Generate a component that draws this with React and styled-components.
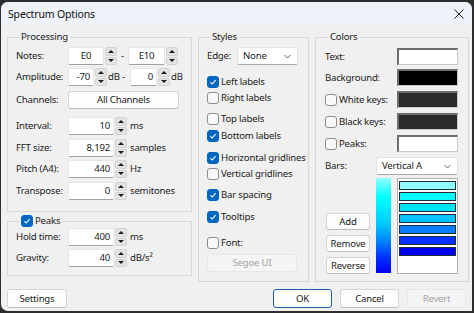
import React from 'react';
import styled, { createGlobalStyle } from 'styled-components';

const Global = createGlobalStyle`
  html, body { margin: 0; padding: 0; background: #2e2e2e; }
  body { width: 474px; height: 313px; overflow: hidden; font-family: "Noto Sans", "Open Sans", sans-serif; }
`;

const Window = styled.div`
  margin: 2px 0 0 1px;
  width: 471px;
  height: 309px;
  background: #f0f0f0;
  border-radius: 7px 7px 0 7px;
  overflow: hidden;
  display: flex;
  flex-direction: column;
  font-size: 9.6px;
  letter-spacing: -0.2px;
  line-height: 12px;
  color: #1b1b1b;
`;

const TitleBar = styled.div`
  height: 24px;
  flex: none;
  background: #eef2f9;
  display: flex;
  align-items: center;
  justify-content: space-between;
  padding: 0 8px 0 7px;
`;

const Title = styled.div`
  font-size: 10.5px;
  letter-spacing: -0.15px;
  color: #111;
`;

const Body = styled.div`
  flex: 1;
  display: flex;
  flex-direction: column;
  padding: 5px 4px 0 6px;
`;

const Columns = styled.div`
  display: grid;
  grid-template-columns: 185px 111px 154px;
  column-gap: 6px;
`;

const LeftCol = styled.div`
  display: flex;
  flex-direction: column;
`;

const Group = styled.fieldset`
  margin: ${p => p.$mt || 0}px 0 0 0;
  padding: ${p => p.$pad};
  border: 1px solid #d8d8d8;
  min-width: 0;
  display: flex;
  flex-direction: column;
`;

const Legend = styled.legend`
  padding: 0 2px;
  margin-left: 3px;
  line-height: 12px;
  display: flex;
  align-items: center;
  gap: 2px;
`;

const Row = styled.div`
  display: flex;
  align-items: center;
  height: ${p => p.$h || 18}px;
  margin-top: ${p => p.$mt || 0}px;
`;

const Label = styled.div`
  width: ${p => p.$w}px;
  flex: none;
  white-space: nowrap;
`;

const Field = styled.div`
  width: ${p => p.$w}px;
  height: 18px;
  box-sizing: border-box;
  flex: none;
  background: #fff;
  border: 1px solid #e6e6e6;
  border-bottom-color: #a2a2a2;
  border-radius: 2px;
  display: flex;
  align-items: center;
  justify-content: ${p => (p.$center ? 'center' : 'flex-end')};
  padding: 0 3px;
`;

const Spin = styled.div`
  width: 12px;
  height: 18px;
  flex: none;
  margin-left: 1px;
  display: flex;
  flex-direction: column;
  gap: 1px;
`;

const SpinBtn = styled.div`
  flex: 1;
  background: #e4e4e4;
  border: 1px solid #d2d2d2;
  border-radius: 2px;
  display: flex;
  align-items: center;
  justify-content: center;
`;

const Arrow = styled.span`
  width: 0;
  height: 0;
  border-left: 3px solid transparent;
  border-right: 3px solid transparent;
  ${p => (p.$up ? 'border-bottom: 3px solid #1e1e1e;' : 'border-top: 3px solid #1e1e1e;')}
`;

const Unit = styled.div`
  margin-left: ${p => p.$ml ?? 3}px;
  width: ${p => (p.$w ? `${p.$w}px` : 'auto')};
  white-space: nowrap;
  flex: none;
  text-align: ${p => p.$align || 'left'};
`;

const Button = styled.div`
  width: ${p => p.$w}px;
  height: ${p => p.$h || 19}px;
  box-sizing: border-box;
  flex: none;
  background: ${p => (p.$disabled ? '#f5f5f5' : '#fdfdfd')};
  color: ${p => (p.$disabled ? '#a3a3a3' : '#1b1b1b')};
  border: 1px solid ${p => (p.$primary ? '#1f5fa8' : p.$disabled ? '#e6e6e6' : '#d4d4d4')};
  border-bottom-color: ${p => (p.$primary ? '#1f5fa8' : p.$disabled ? '#e6e6e6' : '#bdbdbd')};
  border-radius: 3px;
  display: flex;
  align-items: center;
  justify-content: center;
  margin-top: ${p => p.$mt || 0}px;
`;

const Select = styled.div`
  width: ${p => p.$w}px;
  height: 18px;
  box-sizing: border-box;
  flex: none;
  background: #fff;
  border: 1px solid #e2e2e2;
  border-bottom-color: #a8a8a8;
  border-radius: 2px;
  display: flex;
  align-items: center;
  justify-content: space-between;
  padding: 0 6px 0 5px;
`;

const CheckRow = styled.div`
  display: flex;
  align-items: center;
  gap: 2px;
  height: 16px;
  margin-top: ${p => p.$mt || 0}px;
  white-space: nowrap;
`;

const Box = styled.span`
  width: 12px;
  height: 12px;
  box-sizing: border-box;
  flex: none;
  border-radius: 3px;
  border: 1px solid ${p => (p.$on ? '#0067c0' : '#8c8c8c')};
  background: ${p => (p.$on ? '#0067c0' : '#f9f9f9')};
  display: flex;
  align-items: center;
  justify-content: center;
`;

const Swatch = styled.div`
  width: 61px;
  height: 17px;
  box-sizing: border-box;
  flex: none;
  background: ${p => p.$c};
  border: 1px solid;
  border-color: #6e6e6e #c9c9c9 #c9c9c9 #6e6e6e;
  border-top-width: 2px;
  border-left-width: 2px;
`;

const ColorLabel = styled.div`
  width: 72px;
  flex: none;
  display: flex;
  align-items: center;
  gap: 2px;
  white-space: nowrap;
`;

const BarsArea = styled.div`
  display: flex;
  align-items: flex-end;
  margin-top: 3px;
`;

const SideButtons = styled.div`
  display: flex;
  flex-direction: column;
  gap: 5px;
  margin-left: 1px;
`;

const Gradient = styled.div`
  width: 15px;
  height: 95px;
  margin-left: 6px;
  align-self: flex-start;
  background: linear-gradient(#8ffcff, #00ffff 20%, #00e8ff 33%, #00c4ff 50%, #0080ff 67%, #0030ff 84%, #0000f0);
`;

const ColorList = styled.div`
  width: 61px;
  height: 96px;
  box-sizing: border-box;
  margin-left: 6px;
  align-self: flex-start;
  background: #fff;
  border: 1px solid #b0b0b0;
  padding: 2px 1px;
  display: flex;
  flex-direction: column;
  gap: 2px;
`;

const ColorItem = styled.div`
  height: 9px;
  box-sizing: border-box;
  border: 1px solid #1d2c3a;
  background: ${p => p.$c};
`;

const Footer = styled.div`
  display: flex;
  align-items: center;
  margin-top: 7px;
  padding-right: 2px;
  gap: 8px;
`;

const Spacer = styled.div`
  flex: 1;
`;

const Check = ({ on }) => (
  <Box $on={on}>
    {on && (
      <svg width="8" height="8" viewBox="0 0 8 8">
        <polyline points="1.4,4.3 3.2,6 6.6,2.1" fill="none" stroke="#fff" strokeWidth="1.1" />
      </svg>
    )}
  </Box>
);

const Spinner = () => (
  <Spin>
    <SpinBtn><Arrow $up /></SpinBtn>
    <SpinBtn><Arrow /></SpinBtn>
  </Spin>
);

const Chevron = () => (
  <svg width="7" height="5" viewBox="0 0 7 5">
    <polyline points="0.5,1 3.5,4 6.5,1" fill="none" stroke="#555" strokeWidth="0.9" />
  </svg>
);

const NumRow = ({ label, value, unit, mt }) => (
  <Row $mt={mt}>
    <Label $w={52}>{label}</Label>
    <Field $w={46}>{value}</Field>
    <Spinner />
    <Unit>{unit}</Unit>
  </Row>
);

const barColors = ['#8ffcff', '#00ffff', '#00e4f4', '#00c4ff', '#0a7cff', '#0a30ff', '#0000f4'];

export default function App() {
  return (
    <>
      <Global />
      <Window>
        <TitleBar>
          <Title>Spectrum Options</Title>
          <svg width="10" height="10" viewBox="0 0 10 10">
            <path d="M0.5 0.5 L9.5 9.5 M9.5 0.5 L0.5 9.5" stroke="#222" strokeWidth="1" />
          </svg>
        </TitleBar>
        <Body>
          <Columns>
            <LeftCol>
              <Group $pad="4px 6px 11px 8px">
                <Legend>Processing</Legend>
                <Row>
                  <Label $w={52}>Notes:</Label>
                  <Field $w={36} $center>E0</Field>
                  <Spinner />
                  <Unit $ml={0} $w={11} $align="center">-</Unit>
                  <Field $w={37} $center>E10</Field>
                  <Spinner />
                </Row>
                <Row $mt={3}>
                  <Label $w={52}>Amplitude:</Label>
                  <Field $w={26}>-70</Field>
                  <Spinner />
                  <Unit $ml={1} $w={22}>dB -</Unit>
                  <Field $w={27}>0</Field>
                  <Spinner />
                  <Unit $ml={1}>dB</Unit>
                </Row>
                <Row $mt={5}>
                  <Label $w={52}>Channels:</Label>
                  <Button $w={111} $h={18}>All Channels</Button>
                </Row>
                <NumRow mt={8} label="Interval:" value="10" unit="ms" />
                <NumRow mt={4} label="FFT size:" value="8,192" unit="samples" />
                <NumRow mt={3} label="Pitch (A4):" value="440" unit="Hz" />
                <NumRow mt={4} label="Transpose:" value="0" unit="semitones" />
              </Group>
              <Group $mt={3} $pad="1px 6px 8px 8px">
                <Legend><Check on />Peaks</Legend>
                <NumRow label="Hold time:" value="400" unit="ms" />
                <NumRow mt={3} label="Gravity:" value="40" unit="dB/s²" />
              </Group>
            </LeftCol>

            <Group $pad="4px 6px 8px 8px">
              <Legend>Styles</Legend>
              <Row>
                <Label $w={30}>Edge:</Label>
                <Select $w={61}>None<Chevron /></Select>
              </Row>
              <CheckRow $mt={9}><Check on />Left labels</CheckRow>
              <CheckRow><Check />Right labels</CheckRow>
              <CheckRow $mt={5}><Check />Top labels</CheckRow>
              <CheckRow $mt={1}><Check on />Bottom labels</CheckRow>
              <CheckRow $mt={6}><Check on />Horizontal gridlines</CheckRow>
              <CheckRow><Check />Vertical gridlines</CheckRow>
              <CheckRow $mt={5}><Check on />Bar spacing</CheckRow>
              <CheckRow $mt={6}><Check on />Tooltips</CheckRow>
              <CheckRow $mt={10}><Check />Font:</CheckRow>
              <Button $w={90} $h={18} $mt={3} $disabled>Segoe UI</Button>
            </Group>

            <Group $pad="5px 10px 7px 9px">
              <Legend>Colors</Legend>
              <Row $h={17}>
                <ColorLabel>Text:</ColorLabel>
                <Swatch $c="#ffffff" />
              </Row>
              <Row $h={17} $mt={4}>
                <ColorLabel>Background:</ColorLabel>
                <Swatch $c="#000000" />
              </Row>
              <Row $h={17} $mt={5}>
                <ColorLabel><Check />White keys:</ColorLabel>
                <Swatch $c="#2a2a2a" />
              </Row>
              <Row $h={17} $mt={5}>
                <ColorLabel><Check />Black keys:</ColorLabel>
                <Swatch $c="#2a2a2a" />
              </Row>
              <Row $h={17} $mt={5}>
                <ColorLabel><Check />Peaks:</ColorLabel>
                <Swatch $c="#ffffff" />
              </Row>
              <Row $mt={5}>
                <Label $w={51}>Bars:</Label>
                <Select $w={82}>Vertical A<Chevron /></Select>
              </Row>
              <BarsArea>
                <SideButtons>
                  <Button $w={44} $h={17}>Add</Button>
                  <Button $w={44} $h={17}>Remove</Button>
                  <Button $w={44} $h={17}>Reverse</Button>
                </SideButtons>
                <Gradient />
                <ColorList>
                  {barColors.map(c => <ColorItem key={c} $c={c} />)}
                </ColorList>
              </BarsArea>
            </Group>
          </Columns>

          <Footer>
            <Button $w={60}>Settings</Button>
            <Spacer />
            <Button $w={59} $primary>OK</Button>
            <Button $w={59}>Cancel</Button>
            <Button $w={59} $disabled>Revert</Button>
          </Footer>
        </Body>
      </Window>
    </>
  );
}
